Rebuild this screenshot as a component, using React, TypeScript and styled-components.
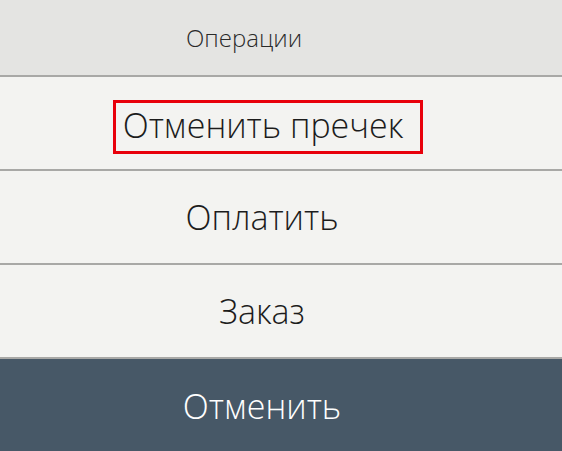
import React from 'react';
import styled, { createGlobalStyle } from 'styled-components';

const GlobalStyle = createGlobalStyle`
  html, body {
    margin: 0;
    padding: 0;
    background: #f3f3f1;
  }
  body {
    font-family: 'Open Sans Light', 'Open Sans', 'Liberation Sans', sans-serif;
    -webkit-font-smoothing: antialiased;
  }
`;

const Screen = styled.div`
  width: 562px;
  height: 451px;
  display: flex;
  flex-direction: column;
  overflow: hidden;
`;

const Header = styled.div`
  height: 75px;
  flex-shrink: 0;
  display: flex;
  align-items: center;
  justify-content: center;
  padding-right: 74px;
  background: #e4e4e2;
  border-bottom: 2px solid #a8a8a6;
  color: #2a2a2a;
  font-size: 24px;
  font-weight: 300;
`;

const Item = styled.div<{ $dark?: boolean }>`
  height: ${p => (p.$dark ? '94px' : '92px')};
  flex-shrink: 0;
  display: flex;
  align-items: center;
  justify-content: center;
  padding-right: 38px;
  background: ${p => (p.$dark ? '#475867' : '#f3f3f1')};
  border-bottom: ${p => (p.$dark ? 'none' : '2px solid #a8a8a6')};
  color: ${p => (p.$dark ? '#ffffff' : '#1c1c1c')};
  font-size: 34px;
  font-weight: 300;
`;

const Label = styled.span<{ $marked?: boolean }>`
  display: inline-block;
  line-height: 42px;
  padding: ${p => (p.$marked ? '1px 17px 5px 7px' : '0')};
  margin: ${p => (p.$marked ? '8px 0 0 12px' : '0')};
  border: ${p => (p.$marked ? '3px solid #e8000b' : 'none')};
`;

const items = [
  { label: 'Отменить пречек', marked: true },
  { label: 'Оплатить' },
  { label: 'Заказ' },
];

const App: React.FC = () => {
  return (
    <>
      <GlobalStyle />
      <Screen>
        <Header>Операции</Header>
        {items.map(item => (
          <Item key={item.label}>
            <Label $marked={item.marked}>{item.label}</Label>
          </Item>
        ))}
        <Item $dark>
          <Label>Отменить</Label>
        </Item>
      </Screen>
    </>
  );
};

export default App;
